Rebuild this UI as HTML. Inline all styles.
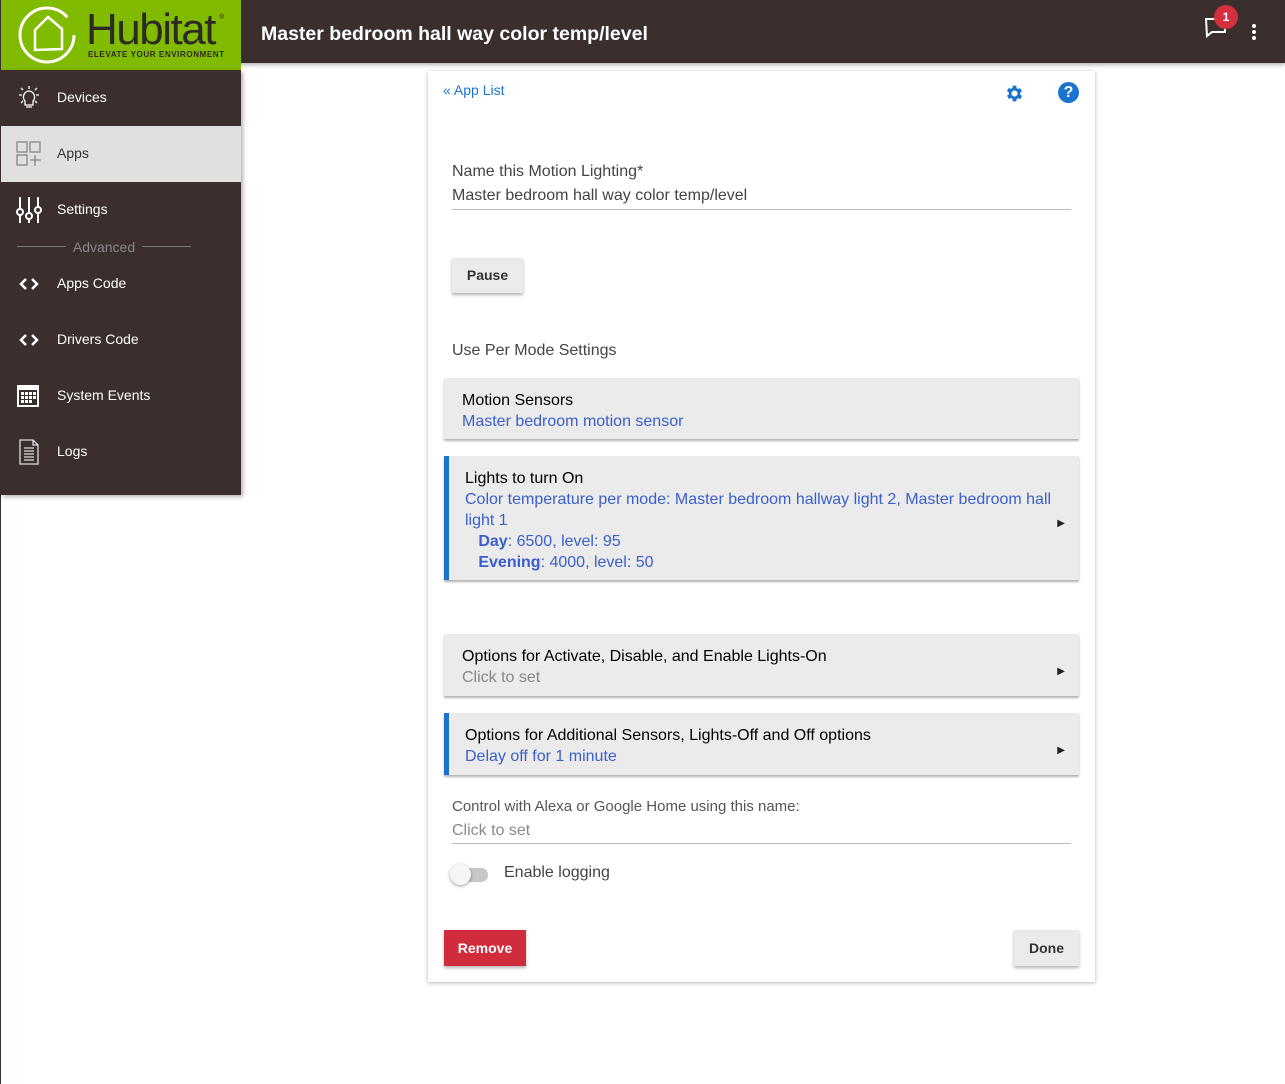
<!DOCTYPE html>
<html><head><meta charset="utf-8"><style>
*{box-sizing:border-box;margin:0;padding:0}
body{width:1285px;height:1084px;background:#fff;font-family:"Liberation Sans",Arial,sans-serif;position:relative;overflow:hidden}
.lb{position:absolute;left:0;top:0;width:1px;height:1084px;background:#3a302e}
.top{position:absolute;left:0;top:0;width:1285px;height:63px;background:#3a2f2d;box-shadow:0 2px 4px rgba(0,0,0,.3)}
.title{position:absolute;left:261px;top:23px;color:#fff;font-size:19.5px;font-weight:bold}
.logo{position:absolute;left:1px;top:0;width:240px;height:70px;background:#80bb00}
.side{position:absolute;left:1px;top:70px;width:240px;height:425px;background:#3a2f2d;box-shadow:2px 2px 4px rgba(0,0,0,.3)}
.nav{position:absolute;left:0;width:240px;height:56px;color:#fff;font-size:14px}
.nav span{position:absolute;left:56px;top:19px}
.nav svg{position:absolute;left:15px;top:15px}
.card{position:absolute;left:428px;top:71px;width:667px;height:911px;background:#fff;box-shadow:0 1px 4px rgba(0,0,0,.3)}
.a{position:absolute;font-size:16px;color:#444}
.tile{position:absolute;left:16px;width:635px;background:#ebebeb;box-shadow:0 2px 2px rgba(0,0,0,.3);font-size:16px;color:#000}
.blue{color:#3a5fcc}
.bl{border-left:5px solid #1a73cc}
.arr{position:absolute;right:14px;font-size:10px;color:#222}
.btn{position:absolute;font-size:14px;font-weight:bold;text-align:center;box-shadow:0 2px 3px rgba(0,0,0,.3)}
</style></head><body>
<div class="top"></div>
<div class="lb"></div>
<div class="title">Master bedroom hall way color temp/level</div>
<svg style="position:absolute;left:1204px;top:16px" width="24" height="22" viewBox="0 0 24 22"><path d="M2 3h19v13H8l-5 4z" fill="none" stroke="#fff" stroke-width="2"/></svg>
<div style="position:absolute;left:1214px;top:5px;width:24px;height:24px;border-radius:12px;background:#d32f3f;color:#fff;font-size:12px;font-weight:bold;text-align:center;line-height:24px">1</div>
<div style="position:absolute;left:1252px;top:24px;width:4px;height:4px;border-radius:2px;background:#fff;box-shadow:0 6px 0 #fff,0 12px 0 #fff"></div>
<div class="logo">
<svg style="position:absolute;left:16px;top:6px" width="60" height="58" viewBox="0 0 60 58"><circle cx="30" cy="29" r="27" fill="none" stroke="#fff" stroke-width="3" stroke-dasharray="150 20"/><path d="M18 44V24L31 11l14 12v20z" fill="none" stroke="#fff" stroke-width="2.5"/></svg>
<div style="position:absolute;left:85px;top:6px;font-size:44px;color:#2d2a26;letter-spacing:-1.5px;line-height:48px">Hubitat</div>
<div style="position:absolute;left:218px;top:14px;font-size:7px;color:#2d2a26">®</div>
<div style="position:absolute;left:87px;top:50px;font-size:8px;font-weight:bold;color:#2d2a26;letter-spacing:.6px">ELEVATE YOUR ENVIRONMENT</div>
</div>
<div class="side">
<div class="nav" style="top:0"><svg width="26" height="26" viewBox="0 0 26 26" fill="none" stroke="#fff" stroke-width="1.3"><path d="M13 6a6 6 0 0 0-4 10v4h8v-4a6 6 0 0 0-4-10zM10 22h6M13 1v3M3 10h3M20 10h3M5 3l2 2M21 3l-2 2M5 18l2-2M21 18l-2-2"/></svg><span>Devices</span></div>
<div class="nav" style="top:56px;background:#e0e0e0;color:#333"><svg width="26" height="26" viewBox="0 0 26 26" fill="none" stroke="#888" stroke-width="1.3"><rect x="1" y="1" width="10" height="10"/><rect x="14" y="1" width="10" height="10"/><rect x="1" y="14" width="10" height="10"/><path d="M19 14v11M14 19h11"/></svg><span>Apps</span></div>
<div class="nav" style="top:112px"><svg width="26" height="26" viewBox="0 0 26 26" fill="none" stroke="#fff" stroke-width="2"><path d="M4 0v26M13 0v26M22 0v26"/><circle cx="4" cy="15" r="3" fill="#3a2f2d"/><circle cx="13" cy="19" r="3" fill="#3a2f2d"/><circle cx="22" cy="13" r="3" fill="#3a2f2d"/></svg><span>Settings</span></div>
<div style="position:absolute;left:16px;top:176px;width:174px;height:1px;background:#777"></div>
<div style="position:absolute;left:65px;top:169px;width:76px;background:#3a2f2d;color:#888;font-size:14px;text-align:center">Advanced</div>
<div class="nav" style="top:186px"><span>Apps Code</span><svg width="22" height="26" viewBox="0 0 22 26" fill="none" stroke="#fff" stroke-width="2.5" style="left:17px"><path d="M8 8l-5 5 5 5M14 8l5 5-5 5"/></svg></div>
<div class="nav" style="top:242px"><span>Drivers Code</span><svg width="22" height="26" viewBox="0 0 22 26" fill="none" stroke="#fff" stroke-width="2.5" style="left:17px"><path d="M8 8l-5 5 5 5M14 8l5 5-5 5"/></svg></div>
<div class="nav" style="top:298px"><svg width="26" height="26" viewBox="0 0 26 26"><rect x="1" y="2" width="22" height="22" fill="#fff"/><rect x="3" y="7" width="18" height="15" fill="#3a2f2d"/><g fill="#fff"><rect x="5" y="9" width="3" height="3"/><rect x="9" y="9" width="3" height="3"/><rect x="13" y="9" width="3" height="3"/><rect x="17" y="9" width="3" height="3"/><rect x="5" y="13" width="3" height="3"/><rect x="9" y="13" width="3" height="3"/><rect x="13" y="13" width="3" height="3"/><rect x="17" y="13" width="3" height="3"/><rect x="5" y="17" width="3" height="3"/><rect x="9" y="17" width="3" height="3"/><rect x="13" y="17" width="3" height="3"/></g></svg><span>System Events</span></div>
<div class="nav" style="top:354px"><svg width="26" height="26" viewBox="0 0 26 26" fill="none" stroke="#ddd" stroke-width="1.3"><path d="M4 1h13l5 5v19H4zM17 1v5h5M8 9h10M8 12h10M8 15h10M8 18h10M8 21h10"/></svg><span>Logs</span></div>
</div>
<div class="card">
<div class="a" style="left:15px;top:11px;font-size:14px;color:#1a73cc">« App List</div>
<svg style="position:absolute;left:576px;top:12px" width="21" height="21" viewBox="0 0 24 24"><path fill="#1a73cc" d="M19.4 13a7.5 7.5 0 0 0 0-2l2.1-1.6-2-3.5-2.5 1a7 7 0 0 0-1.700-1L15 3h-4l-.4 2.7a7 7 0 0 0-1.7 1l-2.5-1-2 3.5L6.6 11a7.5 7.5 0 0 0 0 2l-2.1 1.6 2 3.5 2.5-1a7 7 0 0 0 1.7 1L11 21h4l.4-2.6a7 7 0 0 0 1.7-1l2.5 1 2-3.5zM13 15.5a3.5 3.5 0 1 1 0-7 3.5 3.5 0 0 1 0 7z" transform="translate(-1 0)"/></svg>
<div style="position:absolute;left:630px;top:11px;width:21px;height:21px;border-radius:11px;background:#1a73cc;color:#fff;font-weight:bold;font-size:16px;text-align:center;line-height:21px">?</div>
<div class="a" style="left:24px;top:92px">Name this Motion Lighting*</div>
<div class="a" style="left:24px;top:116px">Master bedroom hall way color temp/level</div>
<div style="position:absolute;left:24px;top:138px;width:619px;height:1px;background:#bbb"></div>
<div class="btn" style="left:24px;top:187px;width:71px;height:35px;line-height:35px;background:#ebebeb;color:#333">Pause</div>
<div class="a" style="left:24px;top:271px">Use Per Mode Settings</div>
<div class="tile" style="top:307px;height:61px;padding:12px 18px;line-height:21px">Motion Sensors<br><span class="blue">Master bedroom motion sensor</span></div>
<div class="tile bl" style="top:385px;height:124px;padding:12px 16px;line-height:21px">Lights to turn On<br><span class="blue">Color temperature per mode: Master bedroom hallway light 2, Master bedroom hall light 1<br>&nbsp;&nbsp;&nbsp;<b>Day</b>: 6500, level: 95<br>&nbsp;&nbsp;&nbsp;<b>Evening</b>: 4000, level: 50</span><span class="arr" style="top:57px">▶</span></div>
<div class="tile" style="top:563px;height:62px;padding:12px 18px;line-height:21px">Options for Activate, Disable, and Enable Lights-On<br><span style="color:#888">Click to set</span><span class="arr" style="top:27px">▶</span></div>
<div class="tile bl" style="top:642px;height:62px;padding:12px 16px;line-height:21px">Options for Additional Sensors, Lights-Off and Off options<br><span class="blue">Delay off for 1 minute</span><span class="arr" style="top:27px">▶</span></div>
<div class="a" style="left:24px;top:727px;font-size:15px;color:#555">Control with Alexa or Google Home using this name:</div>
<div class="a" style="left:24px;top:751px;color:#888">Click to set</div>
<div style="position:absolute;left:24px;top:772px;width:619px;height:1px;background:#bbb"></div>
<div style="position:absolute;left:28px;top:797px;width:32px;height:14px;border-radius:7px;background:#c8c8c8"></div>
<div style="position:absolute;left:22px;top:793px;width:21px;height:21px;border-radius:11px;background:#f5f5f5;box-shadow:0 1px 3px rgba(0,0,0,.4)"></div>
<div class="a" style="left:76px;top:793px">Enable logging</div>
<div class="btn" style="left:16px;top:859px;width:82px;height:36px;line-height:36px;background:#d12c3c;color:#fff">Remove</div>
<div class="btn" style="left:586px;top:859px;width:65px;height:36px;line-height:36px;background:#ebebeb;color:#333">Done</div>
</div>
</body></html>
